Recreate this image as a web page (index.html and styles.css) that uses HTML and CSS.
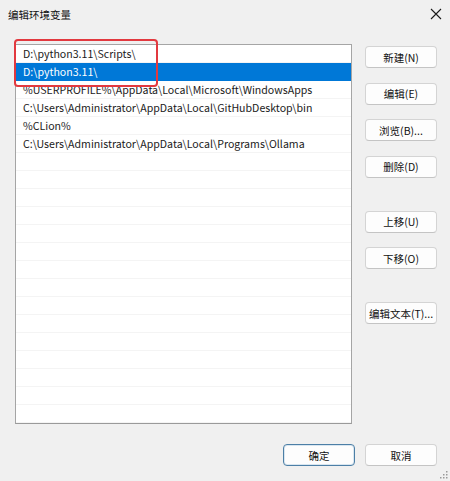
FILE: index.html
```html
<!DOCTYPE html>
<html lang="zh">
<head>
<meta charset="utf-8">
<title>编辑环境变量</title>
<link rel="stylesheet" href="styles.css">
</head>
<body>
<div class="dialog">
  <div class="titlebar">
    <span class="title">编辑环境变量</span>
    <svg class="close" width="12" height="12" viewBox="0 0 12 12"><path d="M1 1L11 11M11 1L1 11" stroke="#1b1b1b" stroke-width="1.1" fill="none"/></svg>
  </div>
  <div class="main">
    <div class="list">
      <div class="row">D:\python3.11\Scripts\</div>
      <div class="row selected">D:\python3.11\</div>
      <div class="row">%USERPROFILE%\AppData\Local\Microsoft\WindowsApps</div>
      <div class="row">C:\Users\Administrator\AppData\Local\GitHubDesktop\bin</div>
      <div class="row">%CLion%</div>
      <div class="row">C:\Users\Administrator\AppData\Local\Programs\Ollama</div>
      <div class="row"></div><div class="row"></div><div class="row"></div>
      <div class="row"></div><div class="row"></div><div class="row"></div>
      <div class="row"></div><div class="row"></div><div class="row"></div>
      <div class="row"></div><div class="row"></div><div class="row"></div>
      <div class="row"></div><div class="row"></div><div class="row"></div>
      <div class="highlight"></div>
    </div>
    <div class="side">
      <button class="btn">新建(N)</button>
      <button class="btn">编辑(E)</button>
      <button class="btn">浏览(B)...</button>
      <button class="btn">删除(D)</button>
      <button class="btn far">上移(U)</button>
      <button class="btn">下移(O)</button>
      <button class="btn far">编辑文本(T)...</button>
    </div>
  </div>
  <div class="footer">
    <button class="btn default">确定</button>
    <button class="btn">取消</button>
  </div>
  <svg class="grip" width="10" height="10" viewBox="0 0 10 10">
    <rect x="7" y="1" width="1.5" height="1.5" fill="#9a9a9a"/>
    <rect x="4" y="4" width="1.5" height="1.5" fill="#9a9a9a"/>
    <rect x="7" y="4" width="1.5" height="1.5" fill="#9a9a9a"/>
    <rect x="1" y="7" width="1.5" height="1.5" fill="#9a9a9a"/>
    <rect x="4" y="7" width="1.5" height="1.5" fill="#9a9a9a"/>
    <rect x="7" y="7" width="1.5" height="1.5" fill="#9a9a9a"/>
  </svg>
</div>
</body>
</html>
```
FILE: styles.css
```css
* { box-sizing: border-box; }
html, body { margin: 0; padding: 0; background: #f0f0f0; }
body {
  font-family: "Noto Sans CJK SC", "Noto Sans", sans-serif;
  font-size: 11px;
  color: #000;
}
.dialog {
  position: relative;
  width: 450px;
  height: 481px;
  background: #f0f0f0;
  display: flex;
  flex-direction: column;
}
.titlebar {
  height: 28px;
  padding: 0 7px 0 8px;
  display: flex;
  align-items: center;
  justify-content: space-between;
}
.title { font-size: 10.5px; color: #111; }
.close { margin-right: 1px; }
.main {
  display: flex;
  padding: 16px 0 0 15px;
  gap: 13px;
}
.list {
  position: relative;
  width: 337px;
  height: 380px;
  border: 1px solid #a5a5a5;
  border-bottom-color: #9a9a9a;
  background: #fff;
  display: flex;
  flex-direction: column;
}
.row {
  height: 18px;
  flex: none;
  padding-left: 7px;
  font-size: 10.6px;
  line-height: 17px;
  border-bottom: 1px solid #f4f4f4;
  white-space: nowrap;
  overflow: hidden;
  color: #1a1a1a;
}
.row.selected {
  background: #0078d7;
  color: #fff;
  border-bottom-color: #0078d7;
}
.highlight {
  position: absolute;
  left: -2px;
  top: -6px;
  width: 144px;
  height: 48px;
  border: 2px solid #e2393f;
  border-radius: 4px;
}
.side {
  display: flex;
  flex-direction: column;
  padding-top: 2px;
}
.btn {
  width: 72px;
  height: 22px;
  margin: 0;
  padding: 0;
  font-family: inherit;
  font-size: 10.5px;
  color: #111;
  background: #fdfdfd;
  border: 1px solid #d4d4d4;
  border-bottom-color: #c4c4c4;
  border-radius: 4px;
}
.side .btn + .btn { margin-top: 14.5px; }
.side .btn.far { margin-top: 33px; }
.footer {
  display: flex;
  justify-content: flex-end;
  gap: 10px;
  padding: 20px 13px 0 0;
}
.btn.default {
  border: 1px solid #4c7fa6;
  box-shadow: inset 0 0 0 1px #d9e6f0;
}
.grip {
  position: absolute;
  right: 1px;
  bottom: 1px;
}
```
